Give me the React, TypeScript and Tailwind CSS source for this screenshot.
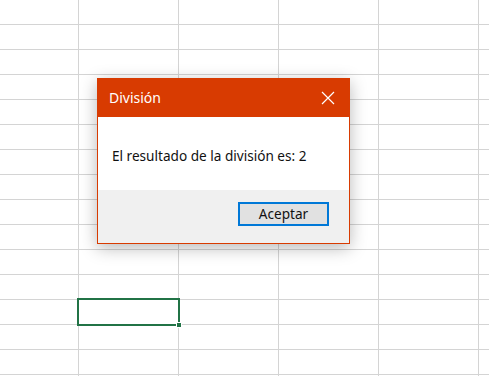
import React from "react";

const cols = [79, 100, 100, 100, 100, 100];
const rows = Array.from({ length: 16 }, (_, i) => i);

export default function App() {
  return (
    <div className="relative w-[489px] h-[376px] overflow-hidden bg-white" style={{ fontFamily: '"Noto Sans", "Open Sans", sans-serif' }}>
      <div className="flex flex-col">
        {rows.map((r) => (
          <div key={r} className="flex shrink-0 h-[25px]">
            {cols.map((w, c) => (
              <div
                key={c}
                className={`shrink-0 h-[25px] border-r border-b border-[#d4d4d4] ${c === 0 ? "w-[79px]" : "w-[100px]"}`}
              />
            ))}
          </div>
        ))}
      </div>

      {/* selected cell */}
      <div className="absolute left-[77px] top-[298px] w-[103px] h-[28px] border-2 border-[#217346]" />
      <div className="absolute left-[176px] top-[322px] w-[6px] h-[6px] bg-[#217346] border border-white" />

      {/* dialog */}
      <div className="absolute left-[97px] top-[78px] w-[253px] h-[166px] border border-[#d83b01] flex flex-col shadow-[0_4px_16px_rgba(0,0,0,0.28)]">
        <div className="h-[38px] bg-[#d83b01] flex items-center justify-between pl-[11px] pr-[14px] shrink-0">
          <span className="text-white text-[14px] leading-none">División</span>
          <svg width="14" height="14" viewBox="0 0 14 14" className="block">
            <path d="M1 1 L13 13 M13 1 L1 13" stroke="white" strokeWidth="1.2" fill="none" />
          </svg>
        </div>
        <div className="h-[73px] bg-white flex items-center pl-[14px] shrink-0">
          <span className="text-[13.6px] text-[#111] leading-none pt-[4px]">El resultado de la división es: 2</span>
        </div>
        <div className="flex-1 bg-[#f0f0f0] flex justify-end items-start pt-[12px] pr-[20px]">
          <button className="w-[91px] h-[24px] border-2 border-[#0078d7] bg-[#e1e1e1] text-[13.6px] text-[#111] leading-none flex items-center justify-center">
            Aceptar
          </button>
        </div>
      </div>
    </div>
  );
}
